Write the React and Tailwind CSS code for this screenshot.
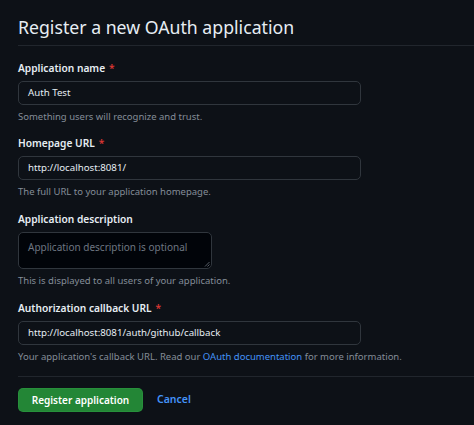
import React from "react";

const FONT = { fontFamily: '"Noto Sans", "Open Sans", Arial, sans-serif' };

function Label({ children, required }) {
  return (
    <label className="block h-4 text-[10.2px] leading-4 font-semibold text-[#e6edf3]">
      {children}
      {required && <span className="ml-1 text-[#da3633]">*</span>}
    </label>
  );
}

function Note({ children }) {
  return <p className="mt-[5px] h-[14px] text-[9.5px] leading-[14px] text-[#848d97]">{children}</p>;
}

function TextInput({ value }) {
  return (
    <div className="mt-[5px] flex h-6 w-[343px] items-center rounded-[5px] border border-[#30363d] bg-[#0d1117] px-[9px] text-[9.7px] text-[#e6edf3]">
      {value}
    </div>
  );
}

export default function App() {
  return (
    <div className="min-h-[425px] w-full overflow-hidden bg-[#0d1117]" style={FONT}>
      <div className="ml-[18px] pt-[15px]">
        <div className="border-b border-[#21262d] pb-[6px]">
          <h1 className="h-6 text-[17.7px] leading-6 font-normal text-[#e6edf3]">
            Register a new OAuth application
          </h1>
        </div>

        <div className="mt-[14px]">
          <Label required>Application name</Label>
          <TextInput value="Auth Test" />
          <Note>Something users will recognize and trust.</Note>
        </div>

        <div className="mt-[11px]">
          <Label required>Homepage URL</Label>
          <TextInput value="http://localhost:8081/" />
          <Note>The full URL to your application homepage.</Note>
        </div>

        <div className="mt-3">
          <Label>Application description</Label>
          <div className="relative mt-[5px] h-[37px] w-[194px] whitespace-nowrap rounded-[5px] border border-[#30363d] bg-[#010409] px-[9px] pt-[7px] text-[10px] leading-[14px] text-[#6e7681]">
            Application description is optional
            <svg className="absolute bottom-[1px] right-[1px]" width="6" height="6" viewBox="0 0 6 6">
              <path d="M5.5 1 L1 5.5 M5.5 3.5 L3.5 5.5" stroke="#6e7681" strokeWidth="0.8" />
            </svg>
          </div>
          <Note>This is displayed to all users of your application.</Note>
        </div>

        <div className="mt-3">
          <Label required>Authorization callback URL</Label>
          <TextInput value="http://localhost:8081/auth/github/callback" />
          <Note>
            Your application's callback URL. Read our{" "}
            <a className="text-[#4493f8]">OAuth documentation</a> for more information.
          </Note>
        </div>

        <div className="mt-3 border-t border-[#21262d] pt-[11px]">
          <div className="flex items-center gap-[14px]">
            <button className="h-6 w-[125px] rounded-[5px] border border-[#2ea043]/40 bg-[#238636] text-[10px] font-semibold text-white">
              Register application
            </button>
            <a className="text-[10.5px] font-semibold text-[#4493f8]">Cancel</a>
          </div>
        </div>
      </div>
    </div>
  );
}
